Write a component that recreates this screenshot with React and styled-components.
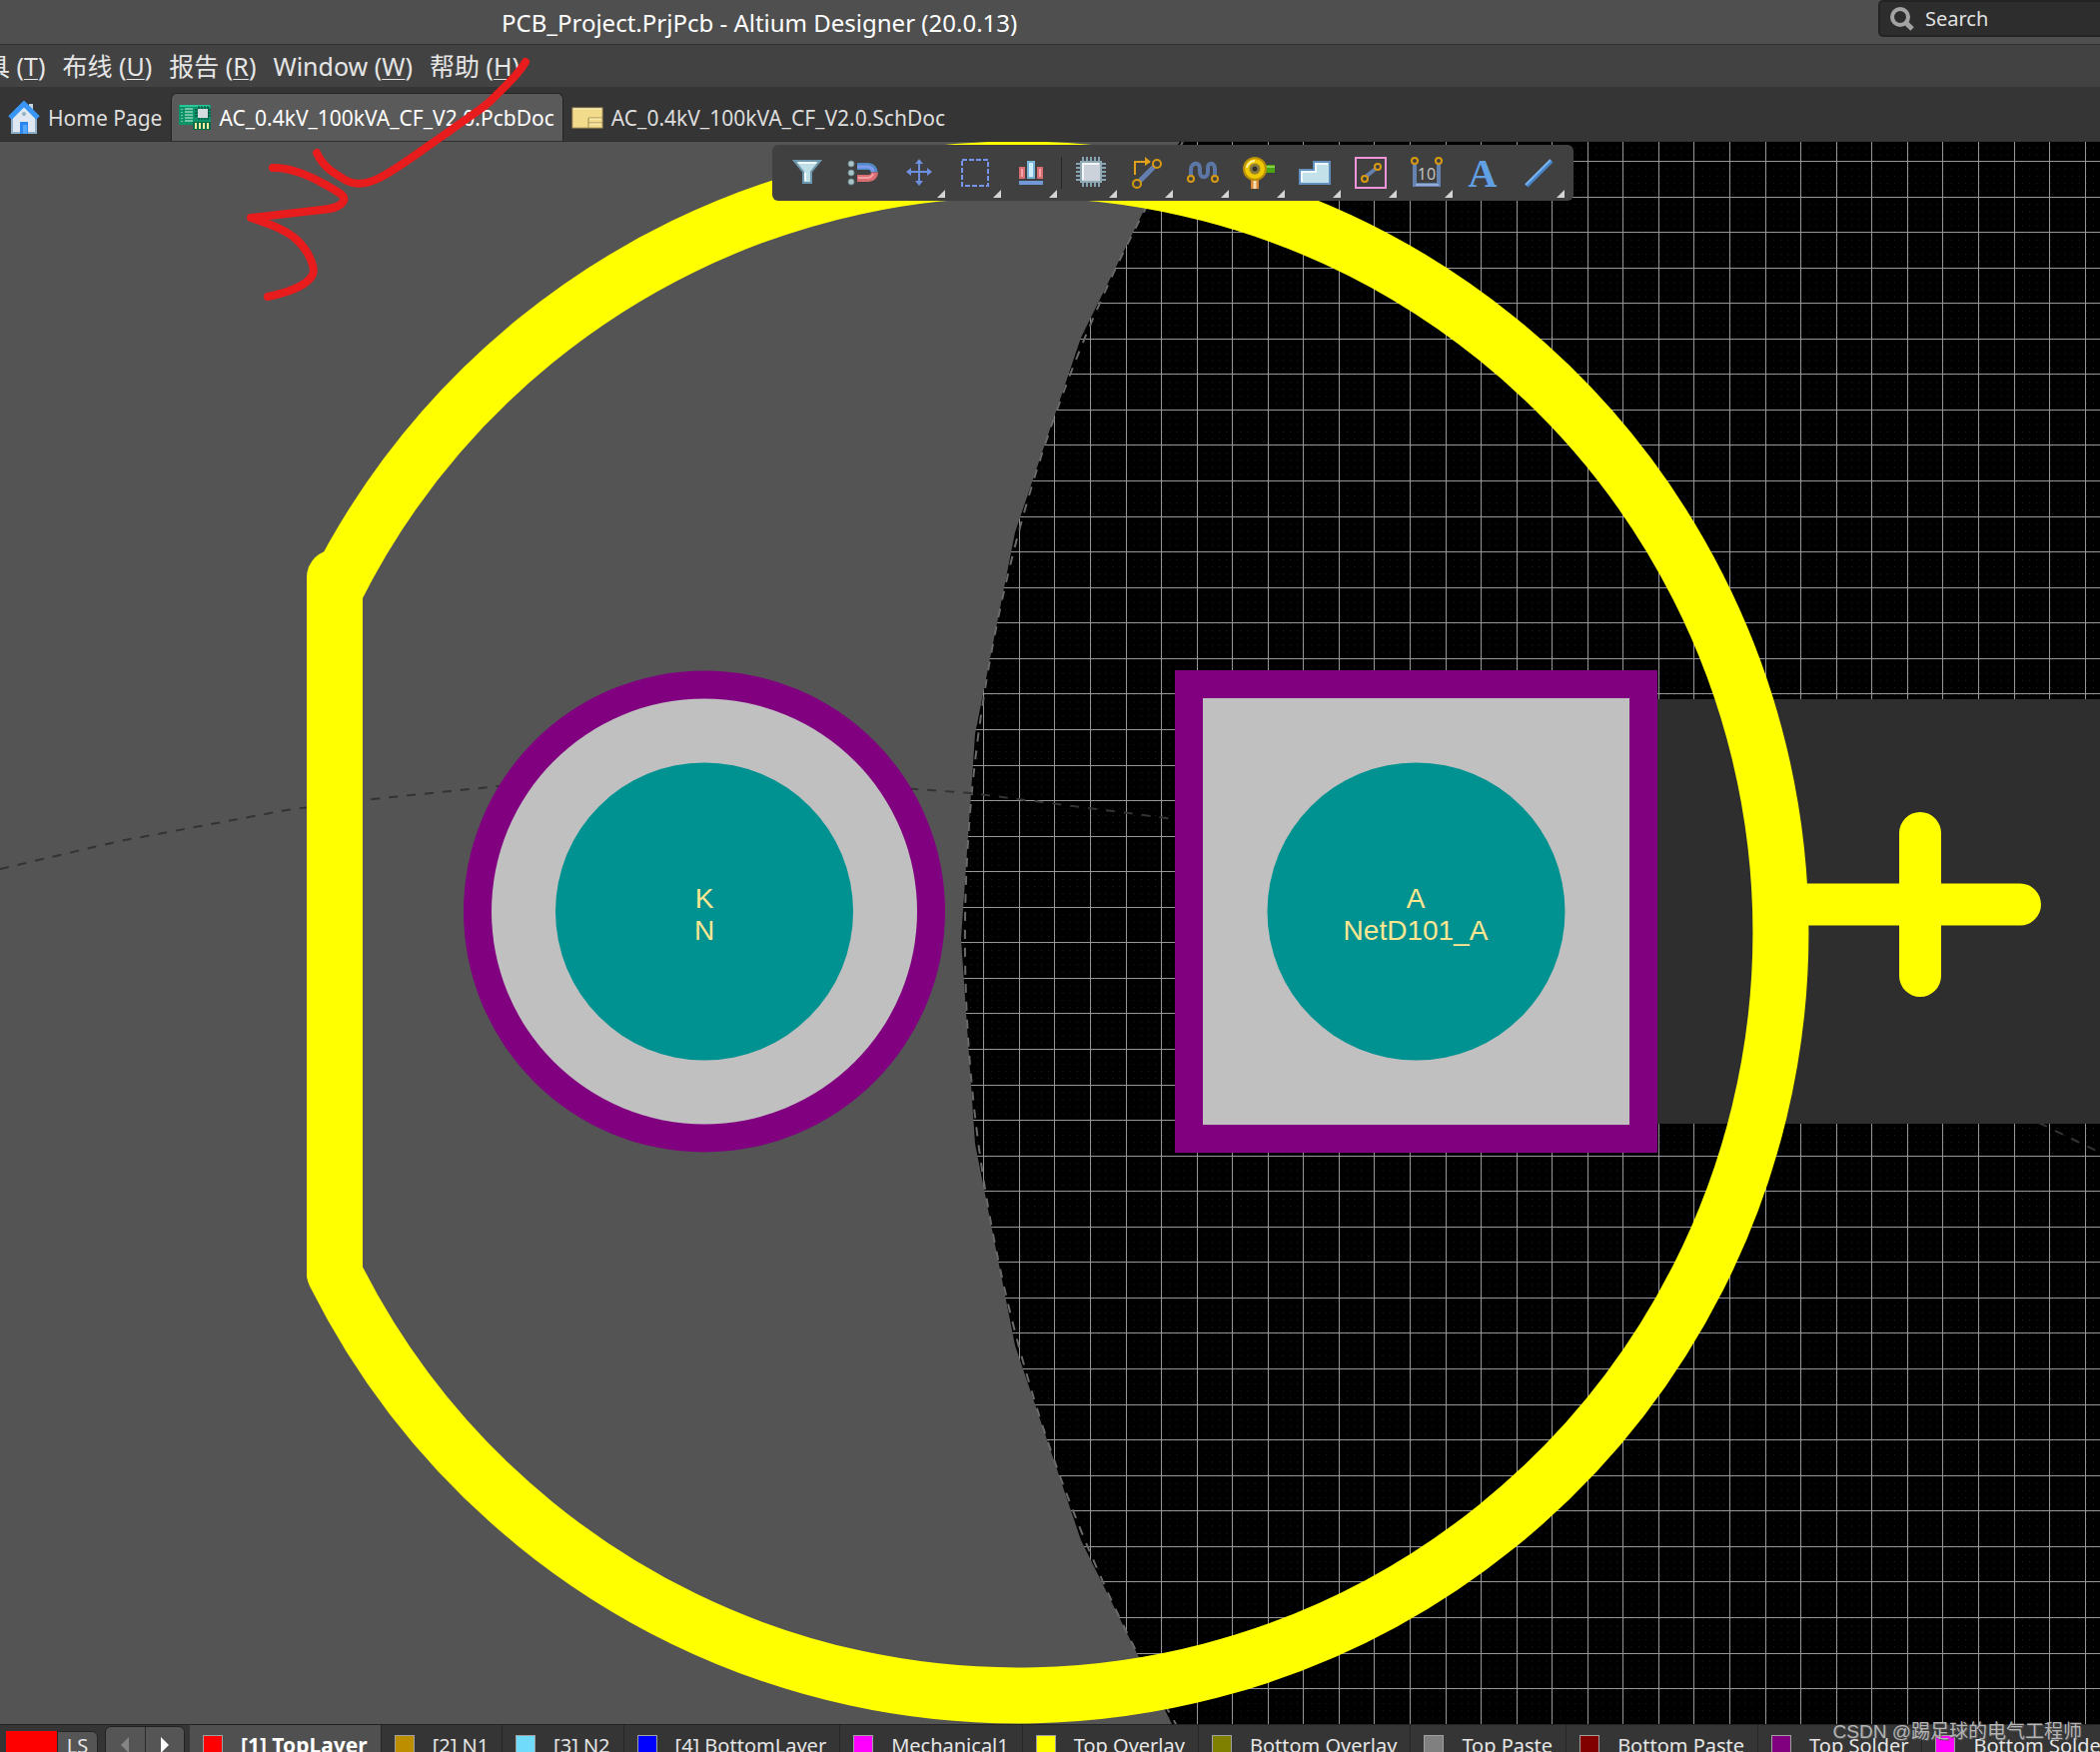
import React from "react";
import styled, {createGlobalStyle} from "styled-components";


const ui = `"Noto Sans", "Noto Sans CJK SC", sans-serif`;

const menus = [
  {label: "工具", hotkey: "T"},
  {label: "布线", hotkey: "U"},
  {label: "报告", hotkey: "R"},
  {label: "Window", hotkey: "W"},
  {label: "帮助", hotkey: "H"},
];

const layers = [
  {name: "[1] TopLayer", color: "#ff0000", active: true},
  {name: "[2] N1", color: "#bc8e00"},
  {name: "[3] N2", color: "#70dbfa"},
  {name: "[4] BottomLayer", color: "#0000ff"},
  {name: "Mechanical1", color: "#ff00ff"},
  {name: "Top Overlay", color: "#ffff00"},
  {name: "Bottom Overlay", color: "#808000"},
  {name: "Top Paste", color: "#808080"},
  {name: "Bottom Paste", color: "#800000"},
  {name: "Top Solder", color: "#800080"},
  {name: "Bottom Solder", color: "#ff00ff"},
];

const pins = [4, 8, 12, 16, 20];

const tools = [
  {
    name: "Filter",
    icon: <>
      <path d="M7 8H33L24 19V30H16V19Z" fill="#bfdfe6" stroke="#6d97ad" strokeWidth="2"/>
      <path d="M11 10H29M18 20V28" stroke="#f2fafc" strokeWidth="2"/>
    </>,
  },
  {
    name: "Snapping",
    icon: <>
      {[11, 20, 29].map(y => <circle key={y} cx="8" cy={y} r="3" fill="#a9c3c6" stroke="#6f8f95"/>)}
      <path d="M14 13.500H25a6 6 0 0 1 6 6" fill="none" stroke="#5489c8" strokeWidth="7"/>
      <path d="M14 14H25a6 6 0 0 1 5 5" fill="none" stroke="#7d9bea" strokeWidth="3"/>
      <path d="M31.500 19.500a6 6 0 0 1-6 6H14" fill="none" stroke="#d96d72" strokeWidth="7"/>
      <path d="M30 21a6 6 0 0 1-5 4H15" fill="none" stroke="#f3a0a4" strokeWidth="2"/>
    </>,
  },
  {
    name: "Move",
    more: true,
    icon: <>
      <path d="M20 8V31M9 19H31" stroke="#6d8fe0" strokeWidth="2"/>
      <path d="M20 6L24 11H16ZM20 33L24 28H16ZM7 19L12 15V23ZM33 19L28 15V23Z" fill="#6d8fe0"/>
    </>,
  },
  {
    name: "Select",
    more: true,
    icon: <rect x="7" y="7" width="26" height="26" fill="none" stroke="#7695ea" strokeWidth="2" strokeDasharray="5 2"/>,
  },
  {
    name: "Align",
    more: true,
    icon: <>
      <path d="M8 14H14V26H8ZM26 14H32V26H26Z" fill="#d96d72"/>
      <path d="M11 16V24M29 16V24" stroke="#f5a5a8" strokeWidth="2"/>
      <path d="M16 8H24V26H16Z" fill="#7ab3d8"/>
      <path d="M20 10V24" stroke="#cdeefa" strokeWidth="4"/>
      <path d="M8 30H32" stroke="#7398d8" strokeWidth="4"/>
    </>,
  },
  {
    name: "Component",
    more: true,
    split: true,
    icon: <>
      {pins.map(p => <path key={p} d={`M${p + 8} 4V34M5 ${p + 7}H35`} stroke="#86a5b3" strokeWidth="2"/>)}
      <rect x="10" y="9" width="20" height="20" fill="#ccd2da" stroke="#8fa9b6" strokeWidth="2"/>
      <path d="M12 27V11H28" fill="none" stroke="#f4f6f8" strokeWidth="2"/>
    </>,
  },
  {
    name: "Route",
    more: true,
    icon: <>
      <path d="M13 28L27 14" stroke="#647fae" strokeWidth="5"/>
      <path d="M8 22V9H20" fill="none" stroke="#e0a01a" strokeWidth="2"/>
      <path d="M18 4L24 9L18 13Z" fill="#e0a01a"/>
      <circle cx="30" cy="11" r="4" fill="#404040" stroke="#d99a12" strokeWidth="2"/>
      <circle cx="10" cy="31" r="4" fill="#404040" stroke="#d99a12" strokeWidth="2"/>
    </>,
  },
  {
    name: "Tune length",
    more: true,
    icon: <>
      <path d="M8 23V17C8 9 17 9 17 15V19C17 26 25 26 25 19V15C25 9 32 9 32 17V23" fill="none" stroke="#5c77a6"
            strokeWidth="4"/>
      <circle cx="8" cy="26" r="3" fill="#404040" stroke="#d99a12" strokeWidth="2"/>
      <circle cx="32" cy="26" r="3" fill="#404040" stroke="#d99a12" strokeWidth="2"/>
    </>,
  },
  {
    name: "Via",
    more: true,
    icon: <>
      <path d="M26 16H36" stroke="#4ba312" strokeWidth="8"/>
      <path d="M26 14H36" stroke="#82cf52" strokeWidth="2"/>
      <path d="M16 26V36" stroke="#d98732" strokeWidth="8"/>
      <path d="M16 26V36" stroke="#f8dcb8" strokeWidth="3"/>
      <circle cx="16" cy="16" r="11" fill="#f0c800" stroke="#b88e08" strokeWidth="2"/>
      <path d="M8 15a8 8 0 0 1 8-7" fill="none" stroke="#fff0a0" strokeWidth="2"/>
      <circle cx="16" cy="16" r="4" fill="#303030" stroke="#8b7d3a" strokeWidth="3"/>
    </>,
  },
  {
    name: "Polygon",
    more: true,
    icon: <>
      <path d="M5 17H19V9H35V31H5Z" fill="#c3e1e9" stroke="#6390bf" strokeWidth="2"/>
      <path d="M7 29V19H21V11H33" fill="none" stroke="#eff9fb" strokeWidth="2"/>
    </>,
  },
  {
    name: "Rules",
    more: true,
    icon: <>
      <rect x="5" y="5" width="30" height="30" fill="none" stroke="#f095d8" strokeWidth="2"/>
      <path d="M15 24L26 15" stroke="#647fae" strokeWidth="4"/>
      <circle cx="27" cy="14" r="3" fill="#404040" stroke="#d99a12" strokeWidth="2"/>
      <circle cx="14" cy="26" r="3" fill="#404040" stroke="#d99a12" strokeWidth="2"/>
    </>,
  },
  {
    name: "Dimension",
    more: true,
    icon: <>
      <path d="M8 12V32H32V12" fill="none" stroke="#6583ae" strokeWidth="4"/>
      <path d="M9 32H32" stroke="#93acd8" strokeWidth="2"/>
      <circle cx="8" cy="8" r="3" fill="#404040" stroke="#d99a12" strokeWidth="2"/>
      <circle cx="32" cy="8" r="3" fill="#404040" stroke="#d99a12" strokeWidth="2"/>
      <text x="20" y="27" textAnchor="middle" fontSize="16" fontFamily="Open Sans" fill="#c8c8c8">10</text>
    </>,
  },
  {
    name: "Text",
    icon: <text x="20" y="34" textAnchor="middle" fontSize="40" fontWeight="bold" fontFamily="Liberation Serif"
                fill="#62a0e6">A</text>,
  },
  {
    name: "Line",
    more: true,
    icon: <>
      <path d="M8 33L33 8" stroke="#4786cc" strokeWidth="4"/>
      <path d="M7 32L32 7" stroke="#7db4f0" strokeWidth="2"/>
    </>,
  },
];

const HomeIcon = () => (
    <svg width="32" height="34" viewBox="0 0 32 34">
      <path d="M21 3H25V12H21Z" fill="#c8d4dc"/>
      <path d="M4 15L16 4L28 15V32H4Z" fill="#dfe8f2" stroke="#8fb0c8" strokeWidth="2"/>
      <path d="M2 17L16 3L30 17" fill="none" stroke="#3a96f5" strokeWidth="5"/>
      <circle cx="16" cy="13" r="2" fill="#8fb0bc"/>
      <path d="M12 21H20V33H12Z" fill="#2b86f0"/>
      <path d="M15 24H19V33H15Z" fill="#56a6fa"/>
    </svg>
);

const PcbIcon = () => (
    <svg width="32" height="26" viewBox="0 0 32 26">
      <path d="M0 0H32V24H14V20H0Z" fill="#0c9468"/>
      <path d="M1 1H31" stroke="#26c89a" strokeWidth="2"/>
      <path d="M6 4H14M6 7H14M6 10H14M6 13H14M6 16H14" stroke="#d8f5ea" strokeWidth="1"/>
      <path d="M3 4V18" stroke="#d8f5ea" strokeDasharray="1 2"/>
      <path d="M20 1V15M23 1V15M26 1V15M29 1V15M16 5H32M16 8H32M16 11H32" stroke="#083f30"/>
      <rect x="19" y="4" width="10" height="9" fill="#d5dcdf"/>
      <path d="M14 17H32V25H14Z" fill="#0a6c48"/>
      <path d="M17 18V24M21 18V24M25 18V24M29 18V24" stroke="#f5ee9a" strokeWidth="2"/>
    </svg>
);

const SchIcon = () => (
    <svg width="32" height="22" viewBox="0 0 32 22">
      <rect x="1" y="1" width="30" height="20" fill="#f2dc8c" stroke="#b39c5e"/>
      <path d="M2 2H30" stroke="#fdf2c0"/>
      <path d="M17 21V11H31M17 16H31" fill="none" stroke="#a08c50"/>
      <path d="M18 12H30M18 17H30" stroke="#fbf0be"/>
    </svg>
);

const SearchIcon = () => (
    <svg width="24" height="24" viewBox="0 0 24 24" fill="none" stroke="#a3a3a3">
      <circle cx="10" cy="10" r="8" strokeWidth="4"/>
      <path d="M15 15L22 22" strokeWidth="5"/>
    </svg>
);

const Board = () => (
    <BoardSvg viewBox="0 142 2102 1584" preserveAspectRatio="xMinYMin slice">
      <defs>
        <pattern id="dots" x="1625.500" y="161.500" width="7.114" height="7.114" patternUnits="userSpaceOnUse">
          <rect width="1" height="1" fill="#222"/>
        </pattern>
      </defs>
      <rect y="142" width="2102" height="1584" fill="#000"/>
      <rect x="900" y="142" width="1202" height="1584" fill="url(#dots)"/>
      <g stroke="#969696" shapeRendering="crispEdges">
        {[...Array(34)].map((_, i) => {
          const x = Math.round(949.7 + i * 35.56) - 0.5;
          return <path key={i} d={`M${x} 142V1726`}/>;
        })}
        {[...Array(44)].map((_, i) => {
          const y = Math.round(162 + i * 35.56) - 0.5;
          return <path key={i} d={`M900 ${y}H2102`}/>;
        })}
      </g>

      {/* copper pour */}
      <path d="M0 142H1181L1173 154L1082 338L1016 533L976 735L962 940L976 1145L1016 1347L1082 1542L1173 1726H0Z"
            fill="#545454"/>
      <path d="M1184 142A1569 1569 0 0 0 1184 1738" fill="none" stroke="#6a6a6a" strokeWidth="2" strokeDasharray="9 9"/>
      <path
          d="M0 870L120 842L287 811L363 801L500 787L620 781L820 783L972 794L1176 820L1600 925L2043 1125L2102 1154"
          fill="none" stroke="#333" strokeWidth="2" strokeDasharray="9 9"/>
      <rect x="1640" y="700" width="462" height="425" fill="#2e2e2e"/>

      {/* pads */}
      <circle cx="705" cy="912.500" r="241" fill="#800080"/>
      <circle cx="705" cy="912.500" r="213" fill="#c0c0c0"/>
      <circle cx="705" cy="912.500" r="149" fill="#009191"/>
      <rect x="1176" y="671" width="483" height="483" fill="#800080"/>
      <rect x="1204" y="699" width="427" height="427" fill="#c0c0c0"/>
      <circle cx="1417.500" cy="912.500" r="149" fill="#009191"/>
      <PadText x="705" y="909">K</PadText>
      <PadText x="705" y="941">N</PadText>
      <PadText x="1417" y="909">A</PadText>
      <PadText x="1417" y="941">NetD101_A</PadText>

      {/* silkscreen */}
      <g fill="none" stroke="#ffff00" strokeWidth="56" strokeLinecap="round">
        <path d="M335 578V1274"/>
        <path d="M335 1275A764 764 0 1 0 335 592"/>
        <path d="M1922 834V977M1800 905.500H2022" strokeWidth="42"/>
      </g>
    </BoardSvg>
);

const App = () => (
    <Window>
      <GlobalStyle/>
      <TitleBar>
        <Title>PCB_Project.PrjPcb - Altium Designer (20.0.13)</Title>
        <Search>
          <SearchIcon/>
          <SearchInput type="text" placeholder="Search" aria-label="Search"/>
        </Search>
      </TitleBar>

      <MenuBar>
        {menus.map(m => (
            <MenuButton key={m.hotkey}>{m.label} (<u>{m.hotkey}</u>)</MenuButton>
        ))}
      </MenuBar>

      <DocTabs>
        <DocTab><HomeIcon/>Home Page</DocTab>
        <DocTab $active><PcbIcon/>AC_0.4kV_100kVA_CF_V2.0.PcbDoc</DocTab>
        <DocTab><SchIcon/>AC_0.4kV_100kVA_CF_V2.0.SchDoc</DocTab>
      </DocTabs>

      <Canvas>
        <Board/>
        <Toolbar>
          {tools.map(t => (
              <React.Fragment key={t.name}>
                {t.split && <Separator/>}
                <ToolButton aria-label={t.name} $more={t.more}>
                  <svg width="40" height="40" viewBox="0 0 40 40">{t.icon}</svg>
                </ToolButton>
              </React.Fragment>
          ))}
        </Toolbar>
      </Canvas>

      <LayerBar>
        <LayerSet>
          <CurrentColor/>
          <LayerSetButton>LS</LayerSetButton>
        </LayerSet>
        <Arrows>
          <ArrowButton aria-label="Previous layers" disabled>
            <svg width="8" height="16" viewBox="0 0 8 16"><path d="M8 0V16L0 8Z" fill="#858585"/></svg>
          </ArrowButton>
          <ArrowButton aria-label="Next layers">
            <svg width="8" height="16" viewBox="0 0 8 16"><path d="M0 0V16L8 8Z" fill="#fff"/></svg>
          </ArrowButton>
        </Arrows>
        {layers.map(l => (
            <LayerTab key={l.name} $active={l.active}>
              <Swatch $color={l.color}/>
              {l.name}
            </LayerTab>
        ))}
      </LayerBar>

      <Ink width="560" height="320" viewBox="0 0 560 320">
        <path d="M317 153C324 168 334 173 347 181C357 186 370 183 380 178C400 168 425 148 449 132C470 116 484 109 494 98C506 86 518 76 526 62"/>
        <path d="M273 168C292 167 316 179 326 185C340 193 346 196 344 201C341 207 333 209 322 210L251 218C272 225 286 230 297 240C309 251 316 268 313 275C307 287 283 294 268 297"/>
      </Ink>
      <Watermark>CSDN @踢足球的电气工程师</Watermark>
    </Window>
);

const GlobalStyle = createGlobalStyle`
    body {
        margin: 0;
        background: #353535;
    }
    * {
        box-sizing: border-box;
    }
    button, input {
        margin: 0;
        padding: 0;
        border: none;
        background: none;
        color: inherit;
        font: inherit;
    }
    svg {
        display: block;
        flex-shrink: 0;
    }
`;

const Window = styled.div`
    position: relative;
    display: grid;
    grid-template-rows: 45px 42px 55px minmax(0, 1fr) 28px;
    grid-template-columns: minmax(0, 1fr);
    height: 100vh;
    overflow: hidden;
    font-family: ${ui};
    color: #e6e6e6;
    white-space: nowrap;
`;

const TitleBar = styled.header`
    display: flex;
    justify-content: space-between;
    align-items: flex-start;
    padding-left: 502px;
    background: #4f4f4f;
    border-bottom: 1px solid #303030;
`;

const Title = styled.div`
    font-size: 24px;
    line-height: 46px;
    color: #fff;
`;

const Search = styled.label`
    display: flex;
    align-items: center;
    gap: 11px;
    width: 222px;
    height: 37px;
    padding-left: 10px;
    background: #2d2d2d;
    border: 2px solid #232323;
    border-right: none;
    border-radius: 5px 0 0 5px;
`;

const SearchInput = styled.input`
    flex: 1;
    min-width: 0;
    font-size: 20px;
    outline: none;
    &::placeholder {
        color: #e0e0e0;
        opacity: 1;
    }
`;

const MenuBar = styled.nav`
    display: flex;
    gap: 17px;
    margin-left: -40px;
    background: #424242;
`;

const MenuButton = styled.button`
    font-size: 25px;
    line-height: 42px;
    u {
        text-underline-offset: 3px;
        text-decoration-thickness: 1px;
    }
`;

const DocTabs = styled.div`
    display: flex;
    align-items: flex-end;
    background: #353535;
    border-bottom: 1px solid #303030;
`;

const DocTab = styled.button`
    display: flex;
    align-items: center;
    gap: 8px;
    height: 48px;
    padding: 0 8px 0 7px;
    font-size: 21px;
    color: ${props => props.$active ? "#fff" : "#dedede"};
    background: ${props => props.$active ? "#5a5a5a" : "none"};
    border: 1px solid ${props => props.$active ? "#242424" : "transparent"};
    border-bottom: none;
    border-radius: 6px 6px 0 0;
`;

const Canvas = styled.main`
    position: relative;
    overflow: hidden;
    background: #000;
`;

const BoardSvg = styled.svg`
    width: 100%;
    height: 100%;
`;

const PadText = styled.text`
    font-family: "Liberation Sans", sans-serif;
    font-size: 28px;
    text-anchor: middle;
    fill: #ffe791;
`;

const Toolbar = styled.div`
    position: absolute;
    top: 3px;
    left: 773px;
    display: flex;
    align-items: center;
    height: 56px;
    padding: 0 7px;
    background: #404040;
    border-radius: 6px;
`;

const ToolButton = styled.button`
    position: relative;
    display: flex;
    justify-content: center;
    align-items: center;
    width: 56px;
    height: 56px;
    &::after {
        content: "";
        display: ${props => props.$more ? "block" : "none"};
        position: absolute;
        right: 2px;
        bottom: 3px;
        border-left: 8px solid transparent;
        border-bottom: 8px solid #d4d4d4;
    }
`;

const Separator = styled.div`
    width: 1px;
    height: 32px;
    margin: 0 1px 0 2px;
    background: #262626;
`;

const LayerBar = styled.footer`
    display: flex;
    overflow: hidden;
    background: #353535;
    border-top: 1px solid #222;
`;

const LayerSet = styled.div`
    display: flex;
    width: 105px;
    flex-shrink: 0;
    height: 36px;
    padding: 6px 7px 0 6px;
`;

const CurrentColor = styled.div`
    width: 51px;
    background: #ff0000;
`;

const LayerSetButton = styled.button`
    flex: 1;
    font-size: 20px;
    line-height: 28px;
    background: #555;
    border: 1px solid #242424;
    border-radius: 0 6px 0 0;
`;

const Arrows = styled.div`
    display: flex;
    flex-shrink: 0;
    width: 80px;
    height: 40px;
    margin: 1px 5px 0 0;
    background: #555;
    border: 1px solid #222;
    border-radius: 6px 6px 0 0;
`;

const ArrowButton = styled.button`
    display: flex;
    flex: 1;
    justify-content: center;
    padding-top: 10px;
    & + & {
        border-left: 1px solid #2a2a2a;
    }
`;

const LayerTab = styled.button`
    display: flex;
    flex-shrink: 0;
    align-items: center;
    gap: 18px;
    height: 40px;
    padding: 0 13px;
    font-size: ${props => props.$active ? "21px" : "20px"};
    font-weight: ${props => props.$active ? "bold" : "normal"};
    color: ${props => props.$active ? "#fff" : "#e6e6e6"};
    background: ${props => props.$active ? "#505050" : "none"};
    border-right: 1px solid #252525;
`;

const Swatch = styled.span`
    width: 20px;
    height: 20px;
    background: ${props => props.$color};
    border: 1px solid #a0a0a0;
`;

const Ink = styled.svg`
    position: absolute;
    top: 0;
    left: 0;
    pointer-events: none;
    fill: none;
    stroke: #e81c1c;
    stroke-width: 8px;
    stroke-linecap: round;
    stroke-linejoin: round;
`;

const Watermark = styled.div`
    position: absolute;
    right: 18px;
    bottom: 6px;
    font-family: "Liberation Sans", "Noto Sans CJK SC", sans-serif;
    font-size: 19px;
    line-height: 28px;
    color: #b4b4b4;
    text-shadow: 1px 1px 1px #555;
`;


export default App;
